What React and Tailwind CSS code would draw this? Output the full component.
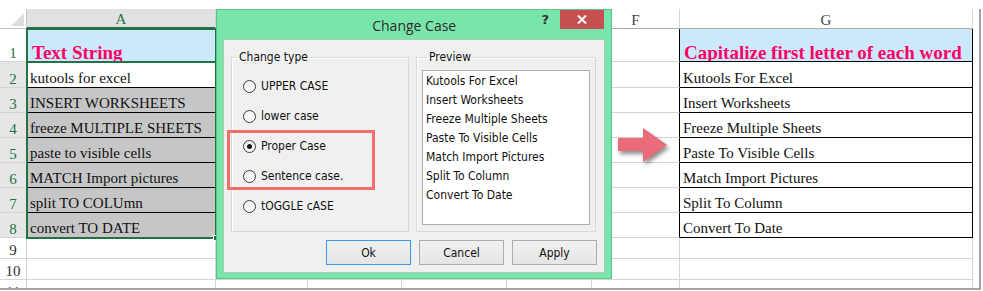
import React from "react";

const ROWS = [
  { n: 1, h: "h-[33px]", a: "Text String", g: "Capitalize first letter of each word", title: true },
  { n: 2, h: "h-[26px]", a: "kutools for excel", g: "Kutools For Excel" },
  { n: 3, h: "h-[25px]", a: "INSERT WORKSHEETS", g: "Insert Worksheets", sel: true },
  { n: 4, h: "h-[25px]", a: "freeze MULTIPLE SHEETS", g: "Freeze Multiple Sheets", sel: true },
  { n: 5, h: "h-[25px]", a: "paste to visible cells", g: "Paste To Visible Cells", sel: true },
  { n: 6, h: "h-[25px]", a: "MATCH Import pictures", g: "Match Import Pictures", sel: true },
  { n: 7, h: "h-[25px]", a: "split TO COLUmn", g: "Split To Column", sel: true },
  { n: 8, h: "h-[25px]", a: "convert TO DATE", g: "Convert To Date", sel: true },
  { n: 9, h: "h-[21px]" },
  { n: 10, h: "h-[21px]" },
  { n: 11, h: "h-[21px]" },
];

// columns B..E sit behind the dialog
const MID = ["w-[92px]", "w-[94px]", "w-[105px]", "w-[85px]"];

const OPTIONS = [
  { label: "UPPER CASE" },
  { label: "lower case" },
  { label: "Proper Case", checked: true },
  { label: "Sentence case." },
  { label: "tOGGLE cASE" },
];

const PREVIEW = [
  "Kutools For Excel",
  "Insert Worksheets",
  "Freeze Multiple Sheets",
  "Paste To Visible Cells",
  "Match Import Pictures",
  "Split To Column",
  "Convert To Date",
];

const Radio = ({ label, checked }) => (
  <div className="flex h-[30px] items-center pl-[11px]">
    <div className="flex h-[13px] w-[13px] items-center justify-center rounded-full border border-[#3a3a3a] bg-gradient-to-b from-[#f4f4f4] to-white">
      {checked && <div className="h-[5px] w-[5px] rounded-full bg-[#1a1a1a]" />}
    </div>
    <span className="ml-[5px] text-[12px] text-[#111]">{label}</span>
  </div>
);

const DialogButton = ({ children, focused }) => (
  <button
    className={`h-[25px] w-[85px] border bg-gradient-to-b from-[#f0f0f0] to-[#e5e5e5] text-[12px] text-[#111] ${
      focused ? "border-[#3c98f0]" : "border-[#adadad]"
    }`}
  >
    {children}
  </button>
);

const ChangeCaseDialog = () => (
  <div className="absolute left-[216px] top-[9px] flex h-[270px] w-[396px] flex-col border border-[#5cc48c] bg-[#78e6aa] font-['DejaVu_Sans_Condensed','DejaVu_Sans',sans-serif]">
    <div className="flex h-[29px] shrink-0 items-start pr-[7px]">
      <div className="flex-1 self-center pl-[70px] pt-[1px] text-center font-['Open_Sans',sans-serif] text-[14px] text-[#2b2b2b]">
        Change Case
      </div>
      <div className="flex h-[19px] items-center gap-[11px]">
        <span className="font-['DejaVu_Sans',sans-serif] text-[13px] font-bold leading-[16px] text-[#333]">?</span>
        <div className="flex h-[19px] w-[44px] items-center justify-center bg-[#c75050]">
          <svg width="10" height="9" viewBox="0 0 10 9">
            <path d="M1 0.5 L9 8.5 M9 0.5 L1 8.5" stroke="white" strokeWidth="2" />
          </svg>
        </div>
      </div>
    </div>

    <div className="mx-[6px] flex h-[234px] flex-col border border-[#a8cbb6] bg-[#f0f0f0]">
      <div className="mt-[10px] flex gap-[7px] px-[7px]">
        <fieldset className="h-[182px] w-[178px] border border-[#d5d9dd] pt-[7px] shadow-[inset_1px_1px_0_#fff]">
          <legend className="ml-[5px] px-[2px] text-[12px] leading-[14px] text-[#111]">Change type</legend>
          {OPTIONS.map((o) => (
            <Radio key={o.label} label={o.label} checked={o.checked} />
          ))}
        </fieldset>
        <fieldset className="h-[182px] w-[180px] border border-[#d5d9dd] px-[5px] pt-[6px] shadow-[inset_1px_1px_0_#fff]">
          <legend className="ml-[5px] px-[2px] text-[12px] leading-[14px] text-[#111]">Preview</legend>
          <div className="h-[155px] border border-[#abadb3] bg-white pl-[3px] pt-[1px]">
            {PREVIEW.map((p) => (
              <div key={p} className="text-[12px] leading-[19px] text-[#111]">
                {p}
              </div>
            ))}
          </div>
        </fieldset>
      </div>
      <div className="mt-[8px] flex justify-end gap-[8px] pr-[7px]">
        <DialogButton focused>Ok</DialogButton>
        <DialogButton>Cancel</DialogButton>
        <DialogButton>Apply</DialogButton>
      </div>
    </div>
  </div>
);

const SheetRow = ({ r }) => {
  const data = r.n <= 8;
  let aCell = "bg-white border-[#d4d4d4]";
  if (r.title) aCell = "bg-[#cce9fb] border-[#d4d4d4]";
  else if (r.n === 2) aCell = "bg-white border-[#d4d4d4] border-b-black";
  else if (r.sel) aCell = "bg-[#c6c6c6] border-[#d4d4d4] border-b-black";

  return (
    <div className={`flex shrink-0 ${r.h}`}>
      <div
        className={`flex w-[27px] shrink-0 items-end justify-center border-r border-b border-[#d4d4d4] text-[15px] leading-[16px] ${
          data ? "text-[#217346]" : "text-[#333]"
        } ${data && r.n > 1 ? "bg-[#e6e6e6]" : "bg-white"}`}
      >
        {r.n}
      </div>
      <div
        className={`flex w-[189px] shrink-0 items-end overflow-hidden whitespace-nowrap border-r border-b ${aCell} ${
          r.title
            ? "pl-[5px] text-[19px] font-bold leading-[17px] text-[#ff0066]"
            : "pl-[3px] text-[15px] leading-[18px] text-[#111]"
        }`}
      >
        {r.a}
      </div>
      {MID.map((w) => (
        <div key={w} className={`${w} shrink-0 border-r border-b border-[#d4d4d4] bg-white`} />
      ))}
      <div className={`w-[88px] shrink-0 border-r border-b border-[#d4d4d4] bg-white ${data ? "border-r-black" : ""}`} />
      <div
        className={`flex w-[293px] shrink-0 items-end overflow-hidden whitespace-nowrap border-r border-b ${
          data ? "border-black" : "border-[#d4d4d4]"
        } ${
          r.title
            ? "bg-[#cce9fb] pl-[4px] text-[19px] font-bold leading-[17px] text-[#ff0066]"
            : "bg-white pl-[3px] text-[15px] leading-[18px] text-[#111]"
        }`}
      >
        {r.g}
      </div>
    </div>
  );
};

export default function App() {
  return (
    <div className="relative h-[291px] w-[983px] overflow-hidden bg-white pt-[9px] font-['Liberation_Serif',serif]">
      <div className="h-[281px] w-[981px] border-r-2 border-b-2 border-[#a3a3a3] pr-[6px]">
        <div className="flex h-full flex-col overflow-hidden">
          <div className="flex h-[20px] shrink-0 text-[15px] leading-[18px] text-[#444]">
            <div className="w-[27px] shrink-0 border-r border-b border-[#c6c6c6] bg-white">
              <svg width="26" height="19" viewBox="0 0 26 19">
                <polygon points="24,4 24,17 11,17" fill="#dcdcdc" />
              </svg>
            </div>
            <div className="flex w-[189px] shrink-0 items-center justify-center border-r border-b-2 border-[#d4d4d4] border-b-[#217346] bg-[#e1e1e1] pt-[2px] text-[#217346]">
              A
            </div>
            {MID.map((w) => (
              <div key={w} className={`${w} shrink-0 border-r border-b border-[#d4d4d4] border-b-[#ababab] bg-white`} />
            ))}
            <div className="flex w-[88px] shrink-0 items-center justify-center border-r border-b border-[#d4d4d4] border-b-[#ababab] bg-white pt-[2px]">
              F
            </div>
            <div className="flex w-[293px] shrink-0 items-center justify-center border-r border-b border-[#d4d4d4] border-b-[#ababab] bg-white pt-[2px]">
              G
            </div>
          </div>
          {ROWS.map((r) => (
            <SheetRow key={r.n} r={r} />
          ))}
        </div>
      </div>

      {/* selection outline on A1:A8 */}
      <div className="absolute left-[26px] top-[28px] h-[211px] w-[191px] border-2 border-[#217346]" />
      <div className="absolute left-[26px] top-[61px] h-[2px] w-[191px] bg-[#217346]" />
      <div className="absolute left-[213px] top-[235px] h-[6px] w-[6px] border border-white bg-[#217346]" />

      <ChangeCaseDialog />

      {/* annotation box */}
      <div className="absolute left-[227px] top-[130px] h-[60px] w-[148px] border-[3px] border-[#f36c6e]" />

      <svg
        className="absolute left-[615px] top-[124px] drop-shadow-[2px_3px_2px_rgba(0,0,0,0.45)]"
        width="60"
        height="46"
        viewBox="0 0 60 46"
      >
        <polygon points="3,14 28,14 28,4 52,21 28,38 28,27 3,27" fill="#ea6b79" />
      </svg>
    </div>
  );
}
